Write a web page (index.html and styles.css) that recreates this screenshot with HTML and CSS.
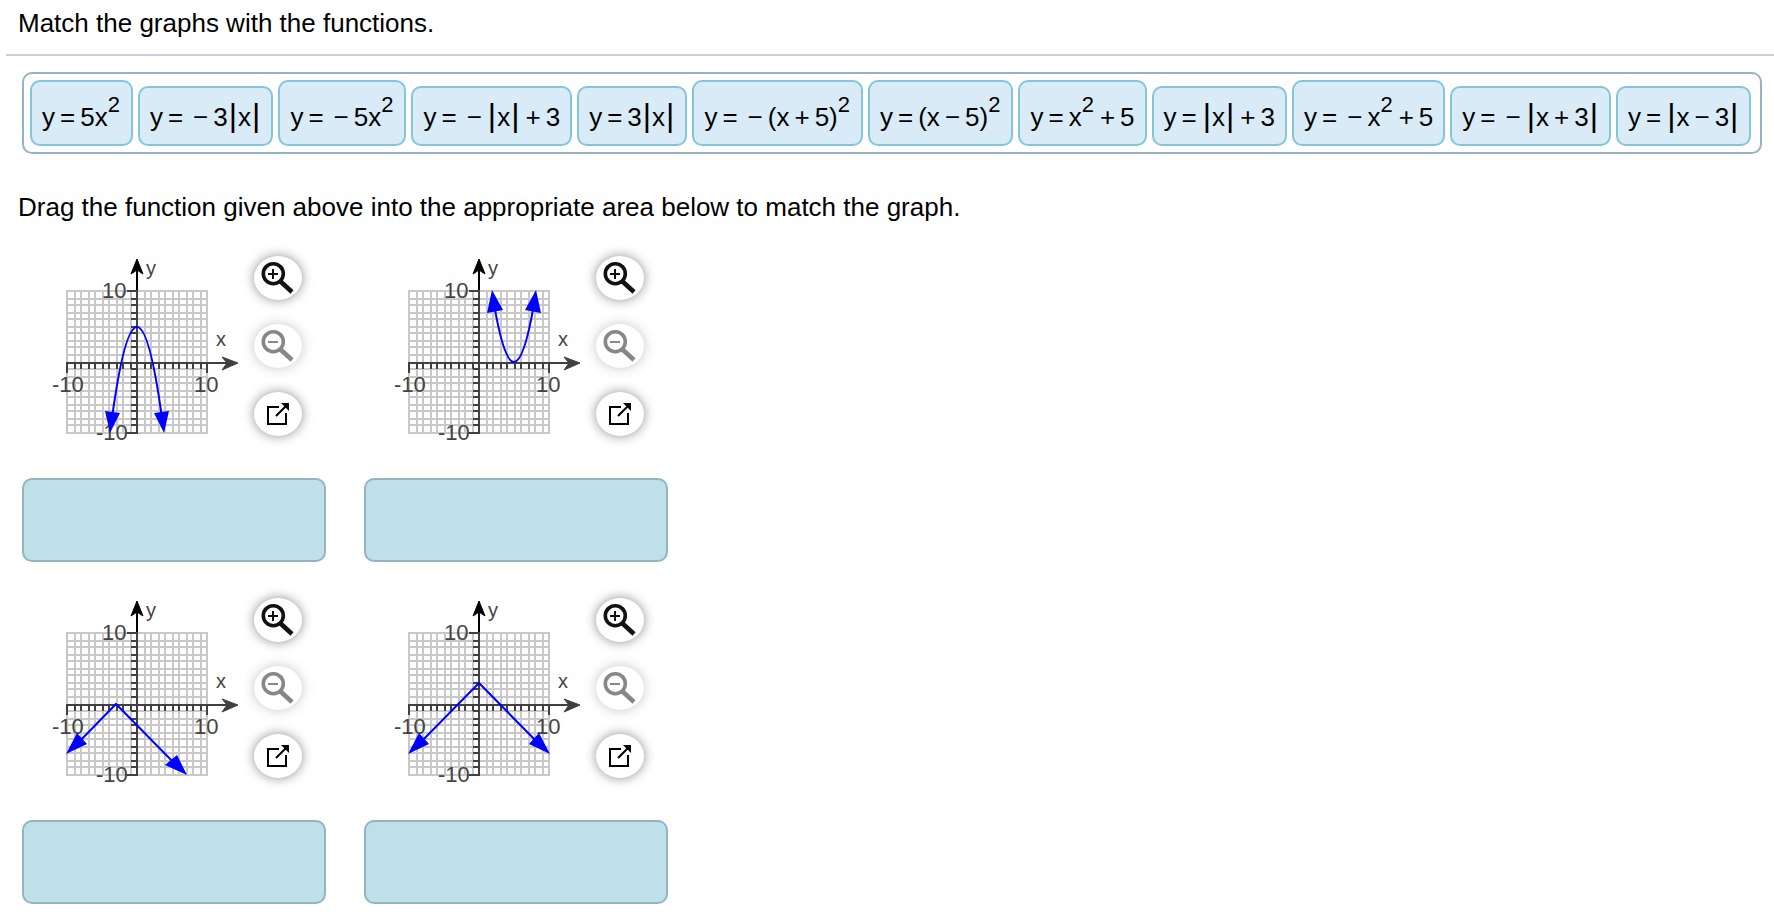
FILE: index.html
```html
<!DOCTYPE html>
<html lang="en">
<head>
  <meta charset="UTF-8">
  <meta name="viewport" content="width=device-width, initial-scale=1.0">
  <title>Match the graphs with the functions</title>
  <link rel="stylesheet" href="styles.css">
</head>
<body>

<!-- shared drawings: grid with axes, and the button icons -->
<svg class="defs" width="0" height="0" aria-hidden="true">
  <defs>
    <g id="axes" fill="none" stroke-width="2">
      <path stroke="#c8c8c8" d="M67 290V434M75 290V434M81 290V434M89 290V434M95 290V434M103 290V434M109 290V434M117 290V434M123 290V434M131 290V434M145 290V434M151 290V434M159 290V434M165 290V434M173 290V434M179 290V434M187 290V434M193 290V434M201 290V434M207 290V434"/>
      <path stroke="#c8c8c8" d="M67 291H207M67 299H207M67 305H207M67 313H207M67 319H207M67 327H207M67 333H207M67 341H207M67 347H207M67 355H207M67 369H207M67 377H207M67 383H207M67 391H207M67 397H207M67 405H207M67 411H207M67 419H207M67 425H207M67 433H207"/>
      <!-- x axis -->
      <path stroke="#404040" d="M66 363H230M67 363V373M75 363V369M81 363V369M89 363V369M95 363V369M103 363V369M109 363V369M117 363V369M123 363V369M131 363V369M145 363V369M151 363V369M159 363V369M165 363V369M173 363V369M179 363V369M187 363V369M193 363V369M201 363V369M207 363V373"/>
      <path fill="#404040" stroke="#404040" stroke-width="1" d="M222 357L238 363L222 370L227 363Z"/>
      <!-- y axis -->
      <path stroke="#404040" d="M137 290V434M127 291H137M131 299H137M131 305H137M131 313H137M131 319H137M131 327H137M131 333H137M131 341H137M131 347H137M131 355H137M131 369H137M131 377H137M131 383H137M131 391H137M131 397H137M131 405H137M131 411H137M131 419H137M131 425H137M127 433H137"/>
      <path stroke="#000" d="M137 266V290"/>
      <path fill="#000" stroke="#000" stroke-width="1" d="M137 259L143 274L137 270L131 274Z"/>
    </g>
    <g id="lens" fill="none" stroke="#111">
      <circle cx="19.3" cy="17.7" r="10" stroke-width="3.6"/>
      <path stroke-width="4.6" d="M26 25L38 36"/>
    </g>
    <g id="zoom-in">
      <use href="#lens"/>
      <path fill="none" stroke="#111" stroke-width="2" d="M14 18H24M19 13V23"/>
    </g>
    <g id="zoom-out">
      <use href="#lens"/>
      <path fill="none" stroke="#111" stroke-width="2" d="M14 18H24"/>
    </g>
    <g id="popout">
      <path fill="none" stroke="#000" stroke-width="2" d="M25 15H14V32H32V21M22 24L32 14"/>
      <path d="M27 11H35V19Z"/>
    </g>
  </defs>
</svg>

<p class="question">Match the graphs with the functions.</p>
<hr>

<div class="bank">
  <button type="button" class="tile">y<i>=</i>5x<sup>2</sup></button>
  <button type="button" class="tile">y<i>=</i><i>−</i>3<b>|</b>x<b>|</b></button>
  <button type="button" class="tile">y<i>=</i><i>−</i>5x<sup>2</sup></button>
  <button type="button" class="tile">y<i>=</i><i>−</i><b>|</b>x<b>|</b><i>+</i>3</button>
  <button type="button" class="tile">y<i>=</i>3<b>|</b>x<b>|</b></button>
  <button type="button" class="tile">y<i>=</i><i>−</i>(x<i>+</i>5)<sup>2</sup></button>
  <button type="button" class="tile">y<i>=</i>(x<i>−</i>5)<sup>2</sup></button>
  <button type="button" class="tile">y<i>=</i>x<sup>2</sup><i>+</i>5</button>
  <button type="button" class="tile">y<i>=</i><b>|</b>x<b>|</b><i>+</i>3</button>
  <button type="button" class="tile">y<i>=</i><i>−</i>x<sup>2</sup><i>+</i>5</button>
  <button type="button" class="tile">y<i>=</i><i>−</i><b>|</b>x<i>+</i>3<b>|</b></button>
  <button type="button" class="tile">y<i>=</i><b>|</b>x<i>−</i>3<b>|</b></button>
</div>

<p class="question">Drag the function given above into the appropriate area below to match the graph.</p>

<div class="graphs">
  <div class="item">
    <div class="plot">
      <svg class="graph" width="232" height="222" viewBox="22 256 232 222">
        <use href="#axes"/>
        <text x="102" y="298">10</text>
        <text x="52" y="392">-10</text>
        <text x="194" y="392">10</text>
        <text x="96" y="440">-10</text>
        <text class="axis" x="146" y="275">y</text>
        <text class="axis" x="216" y="346">x</text>
        <path class="curve" d="M112 418Q137 236 162 418"/>
        <path class="tip" d="M110 433L105 411L120 413ZM164 433L154 413L169 411Z"/>
      </svg>
      <div class="tools">
        <button type="button" aria-label="Zoom in"><svg width="48" height="44"><use href="#zoom-in"/></svg></button>
        <button type="button" aria-label="Zoom out" disabled><svg width="48" height="44"><use href="#zoom-out"/></svg></button>
        <button type="button" aria-label="Open larger graph"><svg width="48" height="44"><use href="#popout"/></svg></button>
      </div>
    </div>
    <div class="drop"></div>
  </div>

  <div class="item">
    <div class="plot">
      <svg class="graph" width="232" height="222" viewBox="22 256 232 222">
        <use href="#axes"/>
        <text x="102" y="298">10</text>
        <text x="52" y="392">-10</text>
        <text x="194" y="392">10</text>
        <text x="96" y="440">-10</text>
        <text class="axis" x="146" y="275">y</text>
        <text class="axis" x="216" y="346">x</text>
        <path class="curve" d="M152 304Q172 420 192 304"/>
        <path class="tip" d="M150 290L145 313L161 310ZM194 290L183 310L199 313Z"/>
      </svg>
      <div class="tools">
        <button type="button" aria-label="Zoom in"><svg width="48" height="44"><use href="#zoom-in"/></svg></button>
        <button type="button" aria-label="Zoom out" disabled><svg width="48" height="44"><use href="#zoom-out"/></svg></button>
        <button type="button" aria-label="Open larger graph"><svg width="48" height="44"><use href="#popout"/></svg></button>
      </div>
    </div>
    <div class="drop"></div>
  </div>

  <div class="item">
    <div class="plot">
      <svg class="graph" width="232" height="222" viewBox="22 256 232 222">
        <use href="#axes"/>
        <text x="102" y="298">10</text>
        <text x="52" y="392">-10</text>
        <text x="194" y="392">10</text>
        <text x="96" y="440">-10</text>
        <text class="axis" x="146" y="275">y</text>
        <text class="axis" x="216" y="346">x</text>
        <path class="curve" d="M75 404L116 362L179 426"/>
        <path class="tip" d="M66 412L77 391L87 402ZM187 433L177 413L165 423Z"/>
      </svg>
      <div class="tools">
        <button type="button" aria-label="Zoom in"><svg width="48" height="44"><use href="#zoom-in"/></svg></button>
        <button type="button" aria-label="Zoom out" disabled><svg width="48" height="44"><use href="#zoom-out"/></svg></button>
        <button type="button" aria-label="Open larger graph"><svg width="48" height="44"><use href="#popout"/></svg></button>
      </div>
    </div>
    <div class="drop"></div>
  </div>

  <div class="item">
    <div class="plot">
      <svg class="graph" width="232" height="222" viewBox="22 256 232 222">
        <use href="#axes"/>
        <text x="102" y="298">10</text>
        <text x="52" y="392">-10</text>
        <text x="194" y="392">10</text>
        <text x="96" y="440">-10</text>
        <text class="axis" x="146" y="275">y</text>
        <text class="axis" x="216" y="346">x</text>
        <path class="curve" d="M75 404L137 341L199 404"/>
        <path class="tip" d="M66 412L77 391L87 402ZM208 412L197 391L187 402Z"/>
      </svg>
      <div class="tools">
        <button type="button" aria-label="Zoom in"><svg width="48" height="44"><use href="#zoom-in"/></svg></button>
        <button type="button" aria-label="Zoom out" disabled><svg width="48" height="44"><use href="#zoom-out"/></svg></button>
        <button type="button" aria-label="Open larger graph"><svg width="48" height="44"><use href="#popout"/></svg></button>
      </div>
    </div>
    <div class="drop"></div>
  </div>
</div>

</body>
</html>
```

FILE: styles.css
```css
body {
  margin: 0;
  padding-top: 8px;
  background: #fff;
  color: #000;
  font-family: "Liberation Sans", Arial, sans-serif;
  font-size: 26px;
  line-height: 30px;
}

.defs {
  position: absolute;
}

.question {
  margin: 0 18px;
}

hr {
  height: 2px;
  margin: 16px 0 16px 6px;
  border: none;
  background: #c8cde0;
}

/* function tiles */
.bank {
  display: flex;
  align-items: flex-end;
  gap: 5px;
  margin: 0 12px 38px 22px;
  padding: 6px;
  border: 2px solid #94b4c4;
  border-radius: 10px;
}

.tile {
  padding: 14px 10px 12px;
  border: 2px solid #83c5da;
  border-radius: 10px;
  background: #d9ebf6;
  color: #000;
  font: inherit;
  white-space: nowrap;
  cursor: grab;
}

.tile i {
  margin: 0 5px;
  font-style: normal;
}

.tile b {
  margin: 0 1px;
  font-size: 32px;
  font-weight: normal;
  line-height: 0;
}

.tile sup {
  margin-right: 1px;
  font-size: 22px;
  line-height: 18px;
  vertical-align: 14px;
}

/* graphs and drop areas */
.graphs {
  display: grid;
  grid-template-columns: repeat(2, 304px);
  gap: 36px 38px;
  margin: 34px 22px 16px;
}

.plot {
  display: flex;
}

.graph {
  display: block;
}

.graph text {
  fill: #444;
  font-size: 22px;
}

.graph .axis {
  font-size: 20px;
}

.curve {
  fill: none;
  stroke: #00f;
  stroke-width: 2;
}

.tip {
  fill: #00f;
}

.tools {
  display: flex;
  flex-direction: column;
  gap: 24px;
}

.tools button {
  width: 48px;
  height: 44px;
  padding: 0;
  border: none;
  border-radius: 50%;
  background: #fff;
  box-shadow: 0 0 12px rgba(0, 0, 0, 0.45);
  cursor: pointer;
}

.tools button:disabled {
  opacity: 0.5;
  cursor: default;
}

.tools svg {
  display: block;
}

.drop {
  height: 80px;
  border: 2px solid #94b4c4;
  border-radius: 10px;
  background: #bfdfe9;
}
```
